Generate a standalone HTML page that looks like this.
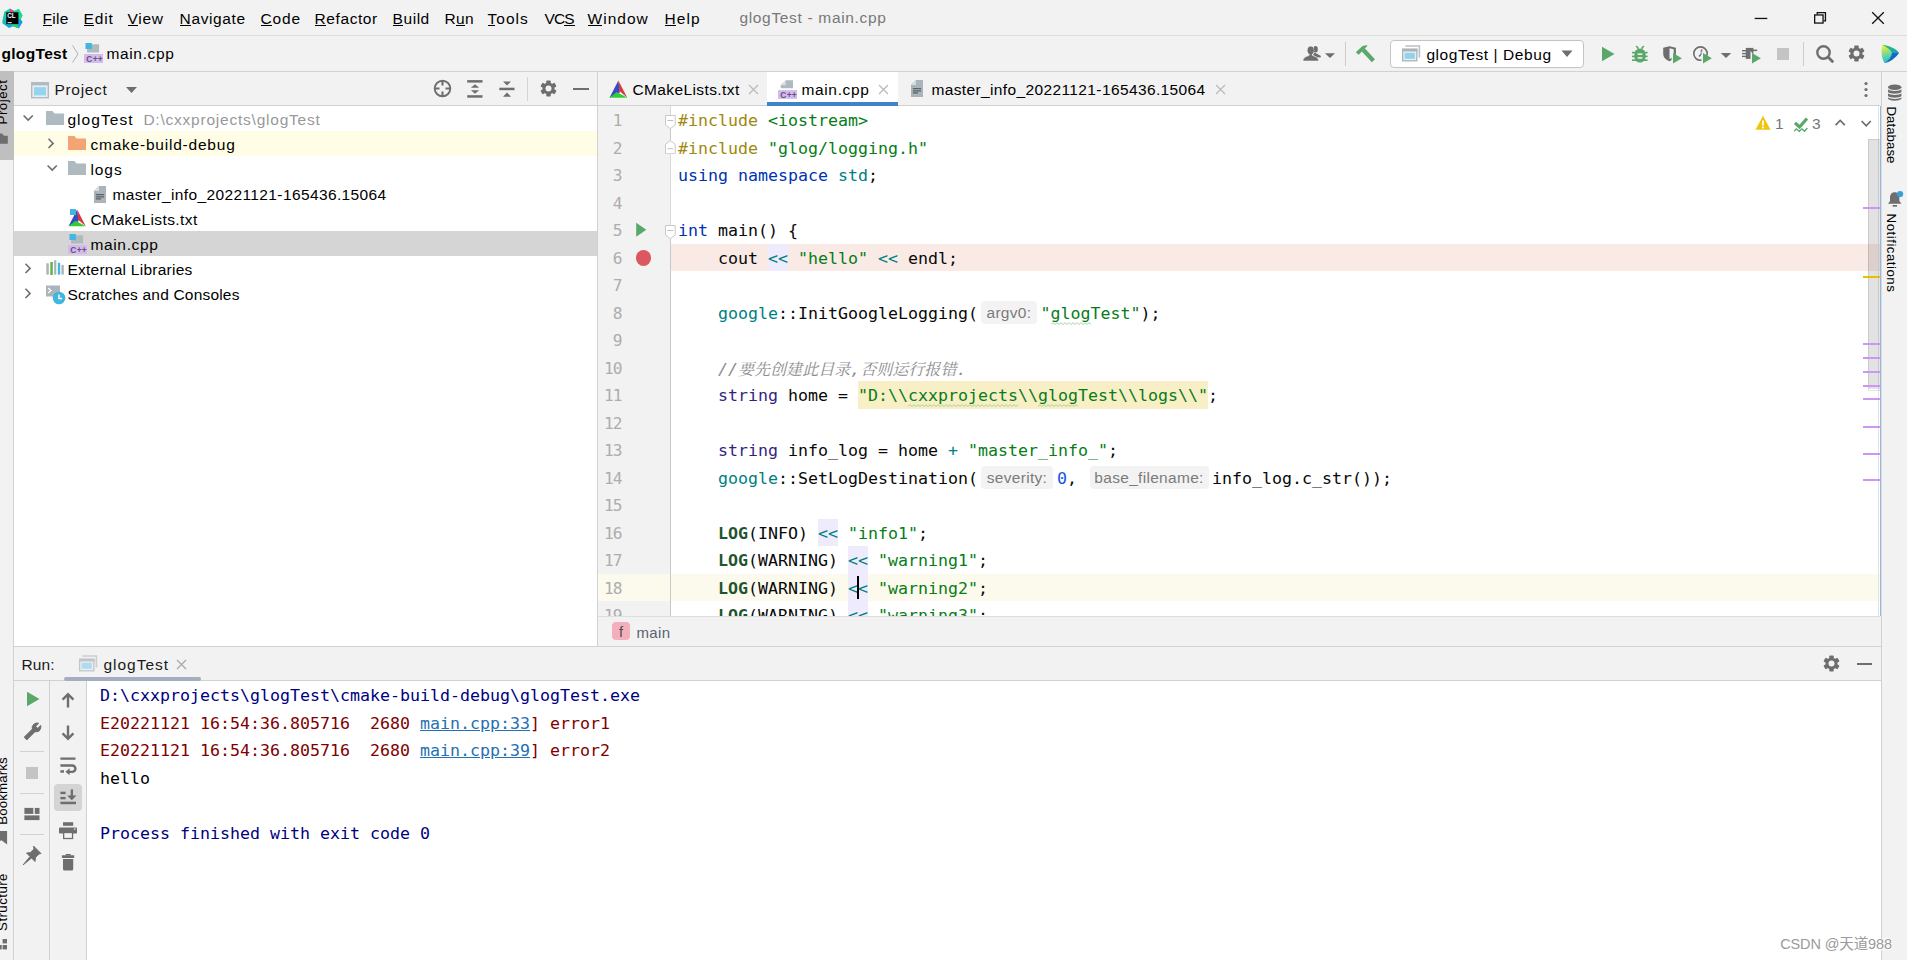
<!DOCTYPE html>
<html lang="zh"><head><meta charset="utf-8"><title>glogTest - main.cpp</title><style>
html,body{margin:0;padding:0;}
body{width:1907px;height:960px;overflow:hidden;background:#f2f2f2;position:relative;font-family:"Liberation Sans","Noto Sans CJK SC",sans-serif;}
.t{position:absolute;white-space:pre;display:block;}
.ui{font-family:"Liberation Sans","Noto Sans CJK SC",sans-serif;}
.mono{font-family:"DejaVu Sans Mono","Liberation Mono","Noto Sans CJK SC",monospace;}
.cl{position:absolute;left:678px;white-space:pre;font-family:"DejaVu Sans Mono","Liberation Mono","Noto Sans CJK SC",monospace;font-size:16.61px;color:#080808;}
.ln{position:absolute;left:598px;width:23.6px;text-align:right;font-family:"DejaVu Sans Mono","Liberation Mono",monospace;font-size:16.2px;color:#adadad;letter-spacing:-0.9px;}
.con{position:absolute;left:100px;white-space:pre;font-family:"DejaVu Sans Mono","Liberation Mono",monospace;font-size:16.61px;height:27px;line-height:27px;}
.hint{display:inline-block;vertical-align:top;height:27px;position:relative;}
.hint i{position:absolute;top:2px;height:23px;line-height:24px;border-radius:4px;background:#f3f3f3;color:#7b7b7b;font-style:normal;font-family:"Liberation Sans",sans-serif;font-size:15.5px;text-align:center;letter-spacing:0.3px;}
.kw{color:#0033b3}.pp{color:#9e880d}.st{color:#067d17}.ns{color:#008080}.nu{color:#1750eb}.ty{color:#371f80}.mc{color:#1f542e;font-weight:bold}.cm{color:#8c8c8c;font-style:italic}
.op{color:#008080}.hl{background:#edebfc}.hl,.hlb{display:inline-block;height:100%;vertical-align:top;}.cj{font-size:16.05px;font-family:"Noto Serif CJK SC","Noto Sans CJK SC",serif;font-weight:400}
.wv{text-decoration:underline wavy #b5d1a0;text-decoration-thickness:1px;text-underline-offset:2px;text-decoration-skip-ink:none}
a{color:#2470b3;text-decoration:underline;}
</style></head><body>
<div style="position:absolute;left:0px;top:0px;width:1907px;height:36px;background:#f2f2f2;"></div>
<div style="position:absolute;left:0px;top:35px;width:1907px;height:1px;background:#dedede;"></div>
<svg style="position:absolute;left:1.5px;top:7.5px;" width="21" height="21" viewBox="0 0 21 21">
<defs><linearGradient id="lg1" x1="0.300" y1="0" x2="0.500" y2="1"><stop offset="0" stop-color="#21d789"/><stop offset="0.550" stop-color="#14c2b4"/><stop offset="1" stop-color="#0a9fe8"/></linearGradient></defs>
<polygon points="0.400,13.300 2.300,3.800 7.900,0.400 12,2.900 16.800,1 20.500,7.300 18.600,11.400 20.500,13.900 16.800,20.200 11.100,18.300 7,19.900 0.400,15.200" fill="url(#lg1)"/>
<polygon points="12,2.900 16.800,1 20.500,7.300 18.600,11.400 14,10" fill="#22d88f"/>
<polygon points="18.600,11.400 20.500,13.900 16.800,20.200 13.500,19.100 14,11" fill="#1e9de6"/>
<polygon points="11.100,18.300 13.500,19.100 16.800,20.200 15,15 9,16" fill="#16d67c"/>
<polygon points="7.900,0.400 12,2.900 10.800,4.600 8.200,4.200" fill="#ee3a92"/>
<rect x="4.300" y="4.300" width="12.100" height="11.800" fill="#000"/>
<text x="5.300" y="10.400" font-family="Liberation Sans,sans-serif" font-size="6.300" font-weight="700" fill="#fff" letter-spacing="-0.100">CL</text>
<rect x="5.500" y="14.200" width="4.300" height="1" fill="#fff"/>
</svg>
<span id="t0" class="t ui mn" style="left:42.6px;top:9px;height:20px;line-height:20px;font-size:15.500px;color:#000;letter-spacing:0.304px;">File</span>
<div style="position:absolute;left:42.59px;top:25px;width:9.48px;height:1px;background:#000;"></div>
<span id="t1" class="t ui mn" style="left:83.6px;top:9px;height:20px;line-height:20px;font-size:15.500px;color:#000;letter-spacing:0.870px;">Edit</span>
<div style="position:absolute;left:83.59px;top:25px;width:10.35px;height:1px;background:#000;"></div>
<span id="t2" class="t ui mn" style="left:127.6px;top:9px;height:20px;line-height:20px;font-size:15.500px;color:#000;letter-spacing:0.718px;">View</span>
<div style="position:absolute;left:127.59px;top:25px;width:10.06px;height:1px;background:#000;"></div>
<span id="t3" class="t ui mn" style="left:179.6px;top:9px;height:20px;line-height:20px;font-size:15.500px;color:#000;letter-spacing:0.627px;">Navigate</span>
<div style="position:absolute;left:179.59px;top:25px;width:11.20px;height:1px;background:#000;"></div>
<span id="t4" class="t ui mn" style="left:260.6px;top:9px;height:20px;line-height:20px;font-size:15.500px;color:#000;letter-spacing:0.784px;">Code</span>
<div style="position:absolute;left:260.59px;top:25px;width:11.20px;height:1px;background:#000;"></div>
<span id="t5" class="t ui mn" style="left:314.6px;top:9px;height:20px;line-height:20px;font-size:15.500px;color:#000;letter-spacing:0.576px;">Refactor</span>
<div style="position:absolute;left:314.59px;top:25px;width:11.21px;height:1px;background:#000;"></div>
<span id="t6" class="t ui mn" style="left:392.6px;top:9px;height:20px;line-height:20px;font-size:15.500px;color:#000;letter-spacing:0.546px;">Build</span>
<div style="position:absolute;left:392.59px;top:25px;width:10.34px;height:1px;background:#000;"></div>
<span id="t7" class="t ui mn" style="left:444.6px;top:9px;height:20px;line-height:20px;font-size:15.500px;color:#000;letter-spacing:0.254px;">Run</span>
<div style="position:absolute;left:456.03px;top:25px;width:8.64px;height:1px;background:#000;"></div>
<span id="t8" class="t ui mn" style="left:487.6px;top:9px;height:20px;line-height:20px;font-size:15.500px;color:#000;letter-spacing:1.003px;">Tools</span>
<div style="position:absolute;left:487.59px;top:25px;width:7.76px;height:1px;background:#000;"></div>
<span id="t9" class="t ui mn" style="left:544.6px;top:9px;height:20px;line-height:20px;font-size:15.500px;color:#000;letter-spacing:-0.892px;">VCS</span>
<div style="position:absolute;left:564.33px;top:25px;width:10.36px;height:1px;background:#000;"></div>
<span id="t10" class="t ui mn" style="left:587.6px;top:9px;height:20px;line-height:20px;font-size:15.500px;color:#000;letter-spacing:1.010px;">Window</span>
<div style="position:absolute;left:587.59px;top:25px;width:14.63px;height:1px;background:#000;"></div>
<span id="t11" class="t ui mn" style="left:664.6px;top:9px;height:20px;line-height:20px;font-size:15.500px;color:#000;letter-spacing:1.077px;">Help</span>
<div style="position:absolute;left:664.59px;top:25px;width:11.20px;height:1px;background:#000;"></div>
<span id="t12" class="t ui" style="left:739.4px;top:8.0px;height:20px;line-height:20px;font-size:15.5px;color:#787878;font-weight:400;letter-spacing:0.673px;">glogTest - main.cpp</span>
<svg style="position:absolute;left:1750px;top:6px;" width="150" height="26" viewBox="0 0 150 26">
<rect x="4.700" y="11.800" width="12.600" height="1.300" fill="#111"/>
<rect x="64.650" y="8.950" width="8.400" height="8.100" fill="none" stroke="#111" stroke-width="1.300"/>
<path d="M67.250 8.400V6.650h8.200v8.200h-1.800" fill="none" stroke="#111" stroke-width="1.300"/>
<path d="M122.200 6.200l11.600 11.500M133.800 6.200l-11.600 11.500" stroke="#111" stroke-width="1.300" fill="none"/>
</svg>
<div style="position:absolute;left:0px;top:37px;width:1907px;height:34px;background:#f2f2f2;"></div>
<div style="position:absolute;left:0px;top:71px;width:1907px;height:1px;background:#d1d1d1;"></div>
<span id="t13" class="t ui" style="left:1.4px;top:43.7px;height:20px;line-height:20px;font-size:15.5px;color:#000;font-weight:700;letter-spacing:0.345px;">glogTest</span>
<svg style="position:absolute;left:70px;top:44px;" width="10" height="20" viewBox="0 0 10 20"><path d="M2.5 1.5L8 10L2.5 18.5" fill="none" stroke="#b0b0b0" stroke-width="1"/></svg>
<svg style="position:absolute;left:84px;top:43px;" width="19" height="20" viewBox="0 0 19 20"><rect x="3.100" y="1.300" width="12" height="8.200" fill="#aeb9c0"/><rect x="1.500" y="0" width="6.300" height="6" fill="#40b6e0"/><rect x="0" y="11" width="19" height="8.900" fill="#d3b9f0"/><text x="2.300" y="18.600" font-family="Liberation Sans,sans-serif" font-size="8.400" font-weight="700" fill="#5f5670" letter-spacing="0.300">C++</text></svg>
<span id="t14" class="t ui" style="left:106.4px;top:43.7px;height:20px;line-height:20px;font-size:15.5px;color:#000;font-weight:400;letter-spacing:0.662px;">main.cpp</span>
<svg style="position:absolute;left:1300px;top:42px;" width="42" height="24" viewBox="0 0 42 24">
<g fill="#6e6e6e"><ellipse cx="15.600" cy="7.200" rx="2.200" ry="3.200"/><path d="M14.500 10.500L21 14l-0.600 1.400-3.400-0.200-4-2.200z"/>
<ellipse cx="10.700" cy="8.300" rx="3.100" ry="3.900" stroke="#f2f2f2" stroke-width="0.800"/><path d="M3 19C3 15.500 6 14.800 9.200 13.300V11h3v2.300C15.500 14.800 18.600 15.500 18.600 19z" stroke="#f2f2f2" stroke-width="0.600"/><ellipse cx="10.700" cy="8.300" rx="3.100" ry="3.900"/></g>
<path d="M25 11.200h10l-5 4.700z" fill="#6e6e6e"/></svg>
<div style="position:absolute;left:1345px;top:42px;width:1px;height:24px;background:#cdcdcd;"></div>
<svg style="position:absolute;left:1354px;top:44px;" width="24" height="22" viewBox="0 0 24 22"><polygon points="1.800,8.200 8.600,1.900 13.400,1.100 12.800,2.600 4.700,10.800" fill="#59a869"/><path d="M9.200 5.800L19.400 16.800" stroke="#59a869" stroke-width="4.200" fill="none"/></svg>
<div style="position:absolute;left:1390px;top:40px;width:192px;height:26px;background:#fff;border:1px solid #c4c4c4;border-radius:4px;"></div>
<svg style="position:absolute;left:1402px;top:45px;" width="19" height="17" viewBox="0 0 19 17"><path d="M3.400 1H17.400V12.400" fill="none" stroke="#b9c1c8" stroke-width="1.600"/><rect x="0.650" y="4.300" width="14.200" height="11.500" fill="#eceff2" stroke="#aab3ba" stroke-width="1.300"/><rect x="0" y="3.700" width="15.500" height="2.800" fill="#aab3ba"/><rect x="2.600" y="7.800" width="10.300" height="6" fill="#8fd3ec"/></svg>
<span id="t15" class="t ui" style="left:1426.4px;top:45.2px;height:20px;line-height:20px;font-size:15.5px;color:#000;font-weight:400;letter-spacing:0.572px;">glogTest | Debug</span>
<svg style="position:absolute;left:1560px;top:49px;" width="14" height="10" viewBox="0 0 14 10"><path d="M1.5 1.5h11l-5.5 6.5z" fill="#6e6e6e"/></svg>
<svg style="position:absolute;left:1600px;top:45px;" width="16" height="18" viewBox="0 0 16 18"><path d="M2 1.800L14.500 9L2 16.200z" fill="#59a869"/></svg>
<svg style="position:absolute;left:1631px;top:44px;" width="18" height="20" viewBox="0 0 18 20"><g fill="#59a869"><rect x="3.400" y="4.600" width="11.200" height="14" rx="5.600"/><rect x="1" y="7.800" width="15.600" height="1.600"/><rect x="1" y="11.600" width="15.600" height="1.600"/><rect x="1" y="15.400" width="15.600" height="1.600"/>
<path d="M5.300 2L7.400 4.800M12.700 2L10.600 4.800" stroke="#59a869" stroke-width="1.600" fill="none"/></g>
<rect x="6.600" y="9.400" width="4.800" height="1.500" fill="#f2f2f2"/><rect x="6.600" y="13.200" width="4.800" height="1.500" fill="#f2f2f2"/></svg>
<svg style="position:absolute;left:1661px;top:44px;" width="22" height="22" viewBox="0 0 22 22"><path d="M2.200 3.800l6.300-1.500 6.400 1.500v5.700c0 4-3 6.500-6.400 7.700-3.400-1.200-6.300-3.700-6.300-7.700z" fill="#6e6e6e"/><path d="M8.500 4.300v10.800c2.300-1 4.200-3 4.200-5.800v-4z" fill="#f2f2f2"/></svg>
<svg style="position:absolute;left:1671.1px;top:51px;" width="13" height="14" viewBox="0 0 13 14"><path d="M0.500 0v14h12.500z" fill="#f2f2f2"/><path d="M2 2.100L10.900 7.300 2 12.500z" fill="#59a869"/></svg>
<svg style="position:absolute;left:1692px;top:44px;" width="22" height="22" viewBox="0 0 22 22"><circle cx="8.500" cy="9.600" r="6.700" fill="none" stroke="#6e6e6e" stroke-width="1.600"/><path d="M9.500 5.500v4.300l-2.500 2.800" fill="none" stroke="#6e6e6e" stroke-width="1.500"/></svg>
<svg style="position:absolute;left:1701.3px;top:51px;" width="13" height="14" viewBox="0 0 13 14"><path d="M0.500 0v14h12.500z" fill="#f2f2f2"/><path d="M2 2.100L10.900 7.300 2 12.500z" fill="#59a869"/></svg>
<svg style="position:absolute;left:1720px;top:52px;" width="12" height="8" viewBox="0 0 12 8"><path d="M0.800 1.100h10.400l-5.200 4.800z" fill="#6e6e6e"/></svg>
<svg style="position:absolute;left:1741px;top:44px;" width="22" height="22" viewBox="0 0 22 22"><g fill="#6e6e6e"><rect x="4.800" y="3.900" width="7.600" height="11" /><rect x="1" y="6" width="4" height="1.400"/><rect x="1" y="8.900" width="4" height="1.400"/><rect x="1" y="11.700" width="4" height="1.400"/><rect x="12" y="5.600" width="4.200" height="1.500"/></g></svg>
<svg style="position:absolute;left:1749.9px;top:51px;" width="13" height="14" viewBox="0 0 13 14"><path d="M0.500 0v14h12.500z" fill="#f2f2f2"/><path d="M2 2.100L10.900 7.300 2 12.500z" fill="#59a869"/></svg>
<div style="position:absolute;left:1777px;top:48px;width:12px;height:12px;background:#c4c4c4;"></div>
<div style="position:absolute;left:1803px;top:42px;width:1px;height:24px;background:#cdcdcd;"></div>
<svg style="position:absolute;left:1815px;top:44px;" width="20" height="20" viewBox="0 0 20 20"><circle cx="8.500" cy="8.500" r="6.200" fill="none" stroke="#6e6e6e" stroke-width="2.400"/><path d="M12.800 12.800l5.400 5.400" stroke="#6e6e6e" stroke-width="2.700"/></svg>
<svg style="position:absolute;left:1848.4px;top:45.3px;" width="17" height="17" viewBox="0 0 17 17"><g transform="translate(8.500 8.500)"><g fill="#6e6e6e"><rect x="-2.200" y="-8.100" width="4.400" height="16.200" rx="0.800"/><rect x="-2.200" y="-8.100" width="4.400" height="16.200" rx="0.800" transform="rotate(60)"/><rect x="-2.200" y="-8.100" width="4.400" height="16.200" rx="0.800" transform="rotate(120)"/><circle r="6"/></g><circle r="3" fill="#f2f2f2"/></g></svg>
<svg style="position:absolute;left:1880px;top:44px;" width="20" height="20" viewBox="0 0 20 20"><defs><linearGradient id="lg2" x1="0.200" y1="0" x2="0.500" y2="1"><stop offset="0" stop-color="#f7f03a"/><stop offset="0.450" stop-color="#7fdc8a"/><stop offset="1" stop-color="#12b8ea"/></linearGradient>
<linearGradient id="lg3" x1="0" y1="0" x2="1" y2="1"><stop offset="0" stop-color="#27c86f"/><stop offset="1" stop-color="#1a9ac9"/></linearGradient></defs>
<path d="M2.300 1C9 1.500 15.500 4.500 19 8.700 15.500 14 10 18 4.500 19 1.500 14 0.800 7 2.300 1z" fill="url(#lg2)"/>
<path d="M2.300 1C9 1.500 15.500 4.500 19 8.700H12C10 5.500 6.500 2.500 2.300 1z" fill="url(#lg3)"/>
<path d="M19 8.700H12C11.500 13 8.500 17 4.500 19 10 18 15.500 14 19 8.700z" fill="#1767c9"/></svg>
<div style="position:absolute;left:0px;top:72px;width:13px;height:888px;background:#f2f2f2;"></div>
<div style="position:absolute;left:13px;top:72px;width:1px;height:888px;background:#d1d1d1;"></div>
<div style="position:absolute;left:0px;top:71px;width:13.5px;height:89px;background:#bfbfbf;"></div>
<span id="v0" class="v ui" style="position:absolute;left:3.1px;top:102.1px;white-space:pre;font-size:13.3px;letter-spacing:0.516px;color:#000;line-height:20px;height:20px;transform:translate(-50%,-50%) rotate(-90deg);">Project</span>
<svg style="position:absolute;left:-1px;top:132.5px;" width="9" height="11" viewBox="0 0 9 11"><path d="M0 0.500h3.300l1.500 2.200h4v8h-8.800z" fill="#6e6e6e"/></svg>
<span id="v1" class="v ui" style="position:absolute;left:3.1px;top:791.35px;white-space:pre;font-size:13.3px;letter-spacing:0.109px;color:#000;line-height:20px;height:20px;transform:translate(-50%,-50%) rotate(-90deg);">Bookmarks</span>
<svg style="position:absolute;left:-0.2px;top:831px;" width="9" height="14" viewBox="0 0 9 14"><path d="M0 0H7.100V13.400L1.450 9.200 0 9.900z" fill="#6e6e6e"/></svg>
<span id="v2" class="v ui" style="position:absolute;left:3.1px;top:901.5px;white-space:pre;font-size:13.3px;letter-spacing:0.427px;color:#000;line-height:20px;height:20px;transform:translate(-50%,-50%) rotate(-90deg);">Structure</span>
<svg style="position:absolute;left:0px;top:938px;" width="10" height="13" viewBox="0 0 10 13"><g fill="#6e6e6e"><rect x="2.600" y="1" width="4.400" height="4.400"/><rect x="2.600" y="7" width="4.400" height="4.400"/><rect x="0" y="7" width="1.700" height="4.400" /></g></svg>
<div style="position:absolute;left:1881px;top:72px;width:26px;height:888px;background:#f2f2f2;"></div>
<div style="position:absolute;left:1881px;top:72px;width:1px;height:888px;background:#d1d1d1;"></div>
<svg style="position:absolute;left:1887.3px;top:84.3px;" width="17" height="17" viewBox="0 0 17 17"><g fill="#6e6e6e" transform="scale(1.03 1)"><ellipse cx="7.500" cy="3.300" rx="6.500" ry="2.800"/><path d="M1 5.300c1.500 2.300 11.500 2.300 13 0v2.700c-1.500 2.300-11.500 2.300-13 0z"/><path d="M1 9.300c1.500 2.300 11.500 2.300 13 0v2.700c-1.500 2.300-11.500 2.300-13 0z"/><path d="M1 13.300c1.500 2.300 11.500 2.300 13 0v1.400c-1.500 2.600-11.500 2.600-13 0z"/></g></svg>
<span id="v3" class="v ui" style="position:absolute;left:1891.4px;top:134.65px;white-space:pre;font-size:13.3px;letter-spacing:0.022px;color:#000;line-height:20px;height:20px;transform:translate(-50%,-50%) rotate(90deg);">Database</span>
<svg style="position:absolute;left:1886px;top:190px;" width="18" height="20" viewBox="0 0 18 20"><path d="M8.700 2.300c-3.300 0-4.700 2.500-4.700 5.300v3.400l-2 2.800h13.400l-2-2.800v-3.400c0-2.800-1.400-5.300-4.700-5.300z" fill="#6e6e6e"/><rect x="6.600" y="15" width="4.400" height="1.700" fill="#6e6e6e"/><circle cx="14.100" cy="4" r="3.100" fill="#389fd6"/></svg>
<span id="v4" class="v ui" style="position:absolute;left:1891.4px;top:252.5px;white-space:pre;font-size:13.3px;letter-spacing:0.489px;color:#000;line-height:20px;height:20px;transform:translate(-50%,-50%) rotate(90deg);">Notifications</span>
<div style="position:absolute;left:14px;top:72px;width:583px;height:33px;background:#f2f2f2;"></div>
<div style="position:absolute;left:14px;top:105px;width:583px;height:1px;background:#d1d1d1;"></div>
<div style="position:absolute;left:14px;top:106px;width:583px;height:540px;background:#ffffff;"></div>
<div style="position:absolute;left:597px;top:72px;width:1px;height:575px;background:#d1d1d1;"></div>
<div style="position:absolute;left:14px;top:646px;width:1867px;height:1px;background:#d1d1d1;"></div>
<svg style="position:absolute;left:31px;top:81.5px;" width="19" height="17" viewBox="0 0 19 17"><rect x="0.700" y="0.700" width="16.600" height="15" fill="#e9edf0" stroke="#b2bbc2" stroke-width="1.400"/><rect x="0" y="0" width="18" height="3.400" fill="#b2bbc2"/><rect x="3" y="5.200" width="12" height="8.200" fill="#94d4ee"/></svg>
<span id="t16" class="t ui" style="left:54.4px;top:79.7px;height:20px;line-height:20px;font-size:15.5px;color:#1a1a1a;font-weight:400;letter-spacing:0.707px;">Project</span>
<svg style="position:absolute;left:125px;top:86px;" width="14" height="8" viewBox="0 0 14 8"><path d="M1 1h11l-5.500 6z" fill="#6e6e6e"/></svg>
<svg style="position:absolute;left:432.5px;top:79.4px;" width="19" height="19" viewBox="0 0 19 19"><circle cx="9.500" cy="9.500" r="7.800" fill="none" stroke="#6e6e6e" stroke-width="1.900"/><path d="M9.500 1.500v5M9.500 12.500v5M1.500 9.500h5M12.500 9.500h5" stroke="#6e6e6e" stroke-width="2.100"/></svg>
<svg style="position:absolute;left:467px;top:80px;" width="16" height="18" viewBox="0 0 16 18"><g fill="#6e6e6e"><rect x="0.200" y="0.100" width="15.300" height="2.500"/><rect x="0.200" y="15.200" width="15.300" height="2.500"/><path d="M8 4.200l4.100 3.600h-8.200zM8 13.800l4.100-3.500h-8.200z"/></g></svg>
<svg style="position:absolute;left:499px;top:80px;" width="16" height="18" viewBox="0 0 16 18"><g fill="#6e6e6e"><rect x="0.300" y="7.700" width="15.200" height="2.500"/><path d="M8 5.400l4-4h-8zM8 12.400l4 4.300h-8z"/></g></svg>
<div style="position:absolute;left:527px;top:77px;width:1px;height:24px;background:#d4d4d4;"></div>
<svg style="position:absolute;left:539.5px;top:80.4px;" width="17" height="17" viewBox="0 0 17 17"><g transform="translate(8.500 8.500)"><g fill="#6e6e6e"><rect x="-2.200" y="-8.100" width="4.400" height="16.200" rx="0.800"/><rect x="-2.200" y="-8.100" width="4.400" height="16.200" rx="0.800" transform="rotate(60)"/><rect x="-2.200" y="-8.100" width="4.400" height="16.200" rx="0.800" transform="rotate(120)"/><circle r="6"/></g><circle r="3" fill="#f2f2f2"/></g></svg>
<div style="position:absolute;left:573.4px;top:87.7px;width:15.2px;height:2.5px;background:#6e6e6e;"></div>
<div style="position:absolute;left:14px;top:131px;width:583px;height:25px;background:#fffde6;"></div>
<div style="position:absolute;left:14px;top:231px;width:583px;height:25px;background:#d5d5d5;"></div>
<svg style="position:absolute;left:22.3px;top:114.4px;" width="13" height="9" viewBox="0 0 13 9"><path d="M1.600 1.500l4.600 4.600 4.600-4.600" fill="none" stroke="#6e6e6e" stroke-width="1.600"/></svg>
<svg style="position:absolute;left:46px;top:111px;" width="18" height="14" viewBox="0 0 18 14"><path d="M0 0h6.500l2 2.500h9.500v11.500h-18z" fill="#afb9c0"/></svg>
<span id="t17" class="t ui" style="left:67.4px;top:109.7px;height:20px;line-height:20px;font-size:15.5px;color:#000;font-weight:400;letter-spacing:1.058px;">glogTest</span>
<span id="t18" class="t ui" style="left:143.4px;top:109.7px;height:20px;line-height:20px;font-size:15.5px;color:#999999;font-weight:400;letter-spacing:0.775px;">D:\cxxprojects\glogTest</span>
<svg style="position:absolute;left:47.3px;top:137.2px;" width="9" height="13" viewBox="0 0 9 13"><path d="M1.500 1.800l4.600 4.600-4.600 4.600" fill="none" stroke="#6e6e6e" stroke-width="1.600"/></svg>
<svg style="position:absolute;left:68px;top:136px;" width="18" height="14" viewBox="0 0 18 14"><path d="M0 0h6.500l2 2.500h9.500v11.500h-18z" fill="#f4a373"/></svg>
<span id="t19" class="t ui" style="left:90.4px;top:134.7px;height:20px;line-height:20px;font-size:15.5px;color:#000;font-weight:400;letter-spacing:0.787px;">cmake-build-debug</span>
<svg style="position:absolute;left:45.8px;top:164.4px;" width="13" height="9" viewBox="0 0 13 9"><path d="M1.600 1.500l4.600 4.600 4.600-4.600" fill="none" stroke="#6e6e6e" stroke-width="1.600"/></svg>
<svg style="position:absolute;left:68px;top:161px;" width="18" height="14" viewBox="0 0 18 14"><path d="M0 0h6.500l2 2.500h9.500v11.500h-18z" fill="#afb9c0"/></svg>
<span id="t20" class="t ui" style="left:90.4px;top:159.7px;height:20px;line-height:20px;font-size:15.5px;color:#000;font-weight:400;letter-spacing:0.941px;">logs</span>
<svg style="position:absolute;left:94px;top:185.6px;" width="12" height="17" viewBox="0 0 12 17"><path d="M5 0h7v17h-12v-12z" fill="#aab4bb"/><path d="M5 0v5h-5z" fill="#d6dce0"/><path d="M1.900 8.700h8.200M1.900 10.800h8.200M1.900 12.900h5.200" stroke="#596066" stroke-width="1.200"/></svg>
<span id="t21" class="t ui" style="left:112.4px;top:184.7px;height:20px;line-height:20px;font-size:15.5px;color:#000;font-weight:400;letter-spacing:0.378px;">master_info_20221121-165436.15064</span>
<svg style="position:absolute;left:68px;top:209.3px;" width="18.3" height="18.3" viewBox="0 0 18 18"><polygon points="9,0.500 17.500,17 0.500,17" fill="#fff"/><polygon points="9,0.500 10.500,12 0.500,17" fill="#3a48c8"/><polygon points="9,0.500 17.500,17 10,10.500" fill="#d93838"/><polygon points="0.500,17 17.500,17 7.500,11.500" fill="#33cc33"/></svg>
<div style="position:absolute;left:69.7px;top:209.2px;width:6.3px;height:5.7px;background:#40b6e0;"></div>
<span id="t22" class="t ui" style="left:90.4px;top:209.7px;height:20px;line-height:20px;font-size:15.5px;color:#000;font-weight:400;letter-spacing:0.397px;">CMakeLists.txt</span>
<svg style="position:absolute;left:68px;top:234px;" width="19" height="20" viewBox="0 0 19 20"><rect x="3.100" y="1.300" width="12" height="8.200" fill="#aeb9c0"/><rect x="1.500" y="0" width="6.300" height="6" fill="#40b6e0"/><rect x="0" y="11" width="19" height="8.900" fill="#d3b9f0"/><text x="2.300" y="18.600" font-family="Liberation Sans,sans-serif" font-size="8.400" font-weight="700" fill="#5f5670" letter-spacing="0.300">C++</text></svg>
<span id="t23" class="t ui" style="left:90.4px;top:234.7px;height:20px;line-height:20px;font-size:15.5px;color:#000;font-weight:400;letter-spacing:0.662px;">main.cpp</span>
<svg style="position:absolute;left:24.3px;top:262.2px;" width="9" height="13" viewBox="0 0 9 13"><path d="M1.500 1.800l4.600 4.600-4.600 4.600" fill="none" stroke="#6e6e6e" stroke-width="1.600"/></svg>
<svg style="position:absolute;left:46px;top:260px;" width="18" height="15" viewBox="0 0 18 15"><rect x="0.300" y="3.300" width="2.500" height="11.300" fill="#aab4bb"/><rect x="4.300" y="2" width="2.500" height="13" fill="#62b543"/><rect x="8.100" y="0.200" width="2.200" height="14.400" fill="#aab4bb"/><rect x="11.800" y="2.800" width="2.400" height="11.800" fill="#40b6e0"/><rect x="15.400" y="4.900" width="2.400" height="9.700" fill="#aab4bb"/></svg>
<span id="t24" class="t ui" style="left:67.4px;top:259.7px;height:20px;line-height:20px;font-size:15.5px;color:#000;font-weight:400;letter-spacing:0.255px;">External Libraries</span>
<svg style="position:absolute;left:24.3px;top:287.2px;" width="9" height="13" viewBox="0 0 9 13"><path d="M1.500 1.800l4.600 4.600-4.600 4.600" fill="none" stroke="#6e6e6e" stroke-width="1.600"/></svg>
<svg style="position:absolute;left:46px;top:285px;" width="20" height="20" viewBox="0 0 20 20"><rect x="0" y="0.500" width="14" height="11" fill="#aab4bb"/><path d="M2 3l3 2.500-3 2.500" fill="none" stroke="#fff" stroke-width="1.200"/><circle cx="13" cy="13" r="6.300" fill="#40b6e0"/><path d="M13 9.500v4h3" fill="none" stroke="#fff" stroke-width="1.400"/></svg>
<span id="t25" class="t ui" style="left:67.4px;top:284.7px;height:20px;line-height:20px;font-size:15.5px;color:#000;font-weight:400;letter-spacing:0.190px;">Scratches and Consoles</span>
<div style="position:absolute;left:598px;top:72px;width:1282px;height:33px;background:#f2f2f2;"></div>
<div style="position:absolute;left:598px;top:105px;width:1282px;height:1px;background:#d1d1d1;"></div>
<div style="position:absolute;left:767px;top:72px;width:131px;height:30px;background:#ffffff;"></div>
<div style="position:absolute;left:767px;top:102px;width:131px;height:4px;background:#4083c9;"></div>
<svg style="position:absolute;left:608.7px;top:79.7px;" width="18.7" height="18.7" viewBox="0 0 18 18"><polygon points="9,0.500 17.500,17 0.500,17" fill="#fff"/><polygon points="9,0.500 10.500,12 0.500,17" fill="#3a48c8"/><polygon points="9,0.500 17.500,17 10,10.500" fill="#d93838"/><polygon points="0.500,17 17.500,17 7.500,11.500" fill="#33cc33"/></svg>
<span id="t26" class="t ui" style="left:632.4px;top:79.7px;height:20px;line-height:20px;font-size:15.5px;color:#000;font-weight:400;letter-spacing:0.397px;">CMakeLists.txt</span>
<svg style="position:absolute;left:747.5px;top:83.5px;" width="11" height="11" viewBox="0 0 11 11"><path d="M1 1l9 9M10 1l-9 9" stroke="#b9b9b9" stroke-width="1.200" fill="none"/></svg>
<svg style="position:absolute;left:778px;top:80px;" width="19" height="20" viewBox="0 0 19 20"><path d="M7.800 0.300h7.200v7.900h-12.200v-3z" fill="#aeb9c0"/><path d="M7.800 0.300v4.900h-5z" fill="#d9dee2"/><rect x="0" y="10.100" width="19" height="8.800" fill="#d3b9f0"/><text x="2.300" y="17.600" font-family="Liberation Sans,sans-serif" font-size="8.400" font-weight="700" fill="#5f5670" letter-spacing="0.300">C++</text></svg>
<span id="t27" class="t ui" style="left:801.4px;top:79.7px;height:20px;line-height:20px;font-size:15.5px;color:#000;font-weight:400;letter-spacing:0.662px;">main.cpp</span>
<svg style="position:absolute;left:877.5px;top:83.5px;" width="11" height="11" viewBox="0 0 11 11"><path d="M1 1l9 9M10 1l-9 9" stroke="#b9b9b9" stroke-width="1.200" fill="none"/></svg>
<svg style="position:absolute;left:911px;top:80.3px;" width="12" height="17" viewBox="0 0 12 17"><path d="M5 0h7v17h-12v-12z" fill="#aab4bb"/><path d="M5 0v5h-5z" fill="#d6dce0"/><path d="M1.900 8.700h8.200M1.900 10.800h8.200M1.900 12.900h5.200" stroke="#596066" stroke-width="1.200"/></svg>
<span id="t28" class="t ui" style="left:931.4px;top:79.7px;height:20px;line-height:20px;font-size:15.5px;color:#000;font-weight:400;letter-spacing:0.378px;">master_info_20221121-165436.15064</span>
<svg style="position:absolute;left:1214.5px;top:83.5px;" width="11" height="11" viewBox="0 0 11 11"><path d="M1 1l9 9M10 1l-9 9" stroke="#b9b9b9" stroke-width="1.200" fill="none"/></svg>
<svg style="position:absolute;left:1863px;top:81px;" width="6" height="17" viewBox="0 0 6 17"><circle cx="3" cy="2.500" r="1.600" fill="#6e6e6e"/><circle cx="3" cy="8.500" r="1.600" fill="#6e6e6e"/><circle cx="3" cy="14.500" r="1.600" fill="#6e6e6e"/></svg>
<div style="position:absolute;left:598px;top:106px;width:1282px;height:510px;background:#fff;overflow:hidden;">
<div style="position:absolute;left:0px;top:0px;width:72px;height:510px;background:#f2f2f2;"></div>
<div style="position:absolute;left:72px;top:0px;width:1px;height:510px;background:#d9d9d9;"></div>
<div style="position:absolute;left:73px;top:138px;width:1209px;height:27px;background:#faeae6;"></div>
<div style="position:absolute;left:0px;top:468px;width:72px;height:27px;background:#fcfaed;"></div>
<div style="position:absolute;left:73px;top:468px;width:1209px;height:27px;background:#fcfaed;"></div>
<div class="ln" style="left:0;top:0px;height:28px;line-height:30px;">1</div>
<div class="cl" style="left:80px;top:0px;height:28px;line-height:30px;"><span class="pp">#include </span><span class="st">&lt;iostream&gt;</span></div>
<div class="ln" style="left:0;top:28px;height:27px;line-height:29px;">2</div>
<div class="cl" style="left:80px;top:28px;height:27px;line-height:29px;"><span class="pp">#include </span><span class="st">"glog/logging.h"</span></div>
<div class="ln" style="left:0;top:55px;height:28px;line-height:30px;">3</div>
<div class="cl" style="left:80px;top:55px;height:28px;line-height:30px;"><span class="kw">using namespace </span><span class="ns">std</span>;</div>
<div class="ln" style="left:0;top:83px;height:27px;line-height:29px;">4</div>
<div class="ln" style="left:0;top:110px;height:28px;line-height:30px;">5</div>
<div class="cl" style="left:80px;top:110px;height:28px;line-height:30px;"><span class="kw">int </span>main() {</div>
<div class="ln" style="left:0;top:138px;height:27px;line-height:29px;">6</div>
<div class="cl" style="left:80px;top:138px;height:27px;line-height:29px;">    cout <span class="op hl">&lt;&lt;</span> <span class="st">"hello"</span> <span class="op">&lt;&lt;</span> endl;</div>
<div class="ln" style="left:0;top:165px;height:28px;line-height:30px;">7</div>
<div class="ln" style="left:0;top:193px;height:27px;line-height:29px;">8</div>
<div class="cl" style="left:80px;top:193px;height:27px;line-height:29px;">    <span class="ns">google</span>::InitGoogleLogging(<span class="hint" style="width:62.5px"><i style="left:2.7px;width:56.5px">argv0:</i></span><span class="st">"glogTest"</span>);</div>
<div class="ln" style="left:0;top:220px;height:28px;line-height:30px;">9</div>
<div class="ln" style="left:0;top:248px;height:27px;line-height:29px;">10</div>
<div class="cl" style="left:80px;top:248px;height:27px;line-height:29px;">    <span class="cm">//<span class="cj">要先创建此目录</span>,<span class="cj">否则运行报错</span>.</span></div>
<div class="ln" style="left:0;top:275px;height:28px;line-height:30px;">11</div>
<div class="cl" style="left:80px;top:275px;height:28px;line-height:30px;">    <span class="ty">string </span>home = <span class="st hlb" style="background:#f9efc7">"D:\\cxxprojects\\glogTest\\logs\\"</span>;</div>
<div class="ln" style="left:0;top:303px;height:27px;line-height:29px;">12</div>
<div class="ln" style="left:0;top:330px;height:28px;line-height:30px;">13</div>
<div class="cl" style="left:80px;top:330px;height:28px;line-height:30px;">    <span class="ty">string </span>info_log = home <span class="op">+</span> <span class="st">"master_info_"</span>;</div>
<div class="ln" style="left:0;top:358px;height:27px;line-height:29px;">14</div>
<div class="cl" style="left:80px;top:358px;height:27px;line-height:29px;">    <span class="ns">google</span>::SetLogDestination(<span class="hint" style="width:79px"><i style="left:3px;width:72px">severity:</i></span><span class="nu">0</span>, <span class="hint" style="width:125px"><i style="left:2.5px;width:119.0px">base_filename:</i></span>info_log.c_str());</div>
<div class="ln" style="left:0;top:385px;height:28px;line-height:30px;">15</div>
<div class="ln" style="left:0;top:413px;height:27px;line-height:29px;">16</div>
<div class="cl" style="left:80px;top:413px;height:27px;line-height:29px;">    <span class="mc">LOG</span>(INFO) <span class="op hl">&lt;&lt;</span> <span class="st">"info1"</span>;</div>
<div class="ln" style="left:0;top:440px;height:28px;line-height:30px;">17</div>
<div class="cl" style="left:80px;top:440px;height:28px;line-height:30px;">    <span class="mc">LOG</span>(WARNING) <span class="op hl">&lt;&lt;</span> <span class="st">"warning1"</span>;</div>
<div class="ln" style="left:0;top:468px;height:27px;line-height:29px;">18</div>
<div class="cl" style="left:80px;top:468px;height:27px;line-height:29px;">    <span class="mc">LOG</span>(WARNING) <span class="op hl">&lt;&lt;</span> <span class="st">"warning2"</span>;</div>
<div class="ln" style="left:0;top:495px;height:28px;line-height:30px;">19</div>
<div class="cl" style="left:80px;top:495px;height:28px;line-height:30px;">    <span class="mc">LOG</span>(WARNING) <span class="op hl">&lt;&lt;</span> <span class="st">"warning3"</span>;</div>
<svg style="position:absolute;left:452.5px;top:215.5px" width="41" height="4" viewBox="0 0 41 4"><polyline points="0.0,2.6 2.0,0.6 4.0,2.6 6.0,0.6 8.0,2.6 10.0,0.6 12.0,2.6 14.0,0.6 16.0,2.6 18.0,0.6 20.0,2.6 22.0,0.6 24.0,2.6 26.0,0.6 28.0,2.6 30.0,0.6 32.0,2.6 34.0,0.6 36.0,2.6 38.0,0.6 40.0,2.6" fill="none" stroke="#8fc38a" stroke-width="0.9" opacity="0.85"/></svg>
<svg style="position:absolute;left:310px;top:297.5px" width="111" height="4" viewBox="0 0 111 4"><polyline points="0.0,2.6 2.0,0.6 4.0,2.6 6.0,0.6 8.0,2.6 10.0,0.6 12.0,2.6 14.0,0.6 16.0,2.6 18.0,0.6 20.0,2.6 22.0,0.6 24.0,2.6 26.0,0.6 28.0,2.6 30.0,0.6 32.0,2.6 34.0,0.6 36.0,2.6 38.0,0.6 40.0,2.6 42.0,0.6 44.0,2.6 46.0,0.6 48.0,2.6 50.0,0.6 52.0,2.6 54.0,0.6 56.0,2.6 58.0,0.6 60.0,2.6 62.0,0.6 64.0,2.6 66.0,0.6 68.0,2.6 70.0,0.6 72.0,2.6 74.0,0.6 76.0,2.6 78.0,0.6 80.0,2.6 82.0,0.6 84.0,2.6 86.0,0.6 88.0,2.6 90.0,0.6 92.0,2.6 94.0,0.6 96.0,2.6 98.0,0.6 100.0,2.6 102.0,0.6 104.0,2.6 106.0,0.6 108.0,2.6 110.0,0.6" fill="none" stroke="#8fc38a" stroke-width="0.9" opacity="0.85"/></svg>
<svg style="position:absolute;left:440px;top:297.5px" width="41" height="4" viewBox="0 0 41 4"><polyline points="0.0,2.6 2.0,0.6 4.0,2.6 6.0,0.6 8.0,2.6 10.0,0.6 12.0,2.6 14.0,0.6 16.0,2.6 18.0,0.6 20.0,2.6 22.0,0.6 24.0,2.6 26.0,0.6 28.0,2.6 30.0,0.6 32.0,2.6 34.0,0.6 36.0,2.6 38.0,0.6 40.0,2.6" fill="none" stroke="#8fc38a" stroke-width="0.9" opacity="0.85"/></svg>
<div style="position:absolute;left:259px;top:470px;width:2px;height:23px;background:#000;"></div>
<svg style="position:absolute;left:37px;top:116px" width="14" height="16" viewBox="0 0 14 16"><path d="M1.200 0.700L11.300 7.700 1.200 14.700z" fill="#59a869"/></svg>
<div style="position:absolute;left:37.60000000000002px;top:143.8px;width:15.800px;height:15.800px;border-radius:50%;background:#db5860;"></div>
<svg style="position:absolute;left:67px;top:9px" width="11" height="14.5" viewBox="0 0 11 14.5"><path d="M0.500 0.500h9.700v9.500l-4.850 3.600-4.850-3.600z" fill="#fff" stroke="#c9c9c9" stroke-width="1"/><path d="M2.500 5.500h5.700" stroke="#c0c0c0" stroke-width="1"/></svg>
<div style="position:absolute;left:72px;top:23px;width:1px;height:11px;background:#c9c9c9;"></div>
<svg style="position:absolute;left:67px;top:33.5px" width="11" height="14.5" viewBox="0 0 11 14.5"><path d="M0.500 13.800h9.700v-9.500l-4.850-3.600-4.850 3.600z" fill="#fff" stroke="#c9c9c9" stroke-width="1"/><path d="M2.500 8.700h5.700" stroke="#c0c0c0" stroke-width="1"/></svg>
<svg style="position:absolute;left:67px;top:119px" width="11" height="14.5" viewBox="0 0 11 14.5"><path d="M0.500 0.500h9.700v9.500l-4.850 3.600-4.850-3.600z" fill="#fff" stroke="#c9c9c9" stroke-width="1"/><path d="M2.500 5.500h5.700" stroke="#c0c0c0" stroke-width="1"/></svg>
<div style="position:absolute;left:72px;top:133px;width:1px;height:380px;background:#c9c9c9;"></div>
<div style="position:absolute;left:1280px;top:0px;width:1px;height:510px;background:#e3e3e3;"></div>
<div style="position:absolute;left:1270px;top:33px;width:11px;height:250px;background:rgba(0,0,0,0.115);"></div>
<div style="position:absolute;left:1270px;top:33px;width:11.5px;height:251.5px;background:transparent;border:1px solid rgba(0,0,0,0.100);box-sizing:border-box;"></div>
<div style="position:absolute;left:1265px;top:100.80000000000001px;width:17px;height:2.4px;background:#cc96f5;"></div>
<div style="position:absolute;left:1265px;top:236.8px;width:17px;height:2.4px;background:#cc96f5;"></div>
<div style="position:absolute;left:1265px;top:250.8px;width:17px;height:2.4px;background:#cc96f5;"></div>
<div style="position:absolute;left:1265px;top:264.8px;width:17px;height:2.4px;background:#cc96f5;"></div>
<div style="position:absolute;left:1265px;top:278.8px;width:17px;height:2.4px;background:#cc96f5;"></div>
<div style="position:absolute;left:1265px;top:291.8px;width:17px;height:2.4px;background:#cc96f5;"></div>
<div style="position:absolute;left:1265px;top:319.8px;width:17px;height:2.4px;background:#cc96f5;"></div>
<div style="position:absolute;left:1265px;top:346.8px;width:17px;height:2.4px;background:#cc96f5;"></div>
<div style="position:absolute;left:1265px;top:372.8px;width:17px;height:2.4px;background:#cc96f5;"></div>
<div style="position:absolute;left:1265px;top:169.5px;width:17px;height:2px;background:#e5bf00;"></div>
<svg style="position:absolute;left:1157px;top:9px" width="16" height="16" viewBox="0 0 16 16"><path d="M8 0.800L15.500 14.800h-15z" fill="#f1c40f"/><rect x="7.100" y="5.500" width="1.800" height="5" fill="#fff"/><rect x="7.100" y="11.600" width="1.800" height="1.800" fill="#fff"/></svg>
<svg style="position:absolute;left:1195px;top:8px" width="17" height="19" viewBox="0 0 17 19"><path d="M2 8.800l4.500 4.200 7.500-8.500" fill="none" stroke="#59a869" stroke-width="3.200"/><path d="M1.200 17.300l2.200-2.500 2.900 2.500 2.600-2.500 2.600 2.500 2.900-3.300" fill="none" stroke="#59a869" stroke-width="1.300"/></svg>
<svg style="position:absolute;left:1236px;top:12px" width="13" height="9" viewBox="0 0 13 9"><path d="M1.600 7.200l4.600-4.800 4.600 4.800" fill="none" stroke="#6e6e6e" stroke-width="1.700"/></svg>
<svg style="position:absolute;left:1261.8px;top:13px" width="13" height="9" viewBox="0 0 13 9"><path d="M1.600 2l4.600 4.800 4.600-4.800" fill="none" stroke="#6e6e6e" stroke-width="1.700"/></svg>
<span class="ui" style="position:absolute;left:1177px;top:8px;height:20px;line-height:20px;font-size:15.500px;color:#767676;">1</span>
<span class="ui" style="position:absolute;left:1214px;top:8px;height:20px;line-height:20px;font-size:15.500px;color:#767676;">3</span>
</div>
<div style="position:absolute;left:1880px;top:106px;width:1px;height:510px;background:#93b8e6;"></div>
<div style="position:absolute;left:1881px;top:106px;width:1px;height:510px;background:#dadada;"></div>
<div style="position:absolute;left:598px;top:616px;width:1282px;height:30px;background:#f2f2f2;"></div>
<div style="position:absolute;left:598px;top:616px;width:1282px;height:1px;background:#dedede;"></div>
<div style="position:absolute;left:612px;top:622px;width:18px;height:18px;border-radius:4px;background:#f4afbd;"></div>
<span class="ui" style="position:absolute;left:612px;top:622.500px;width:18px;height:18px;line-height:18px;text-align:center;font-size:14.500px;color:#4d4d4d;">f</span>
<span id="t29" class="t ui" style="left:636.4px;top:622.7px;height:20px;line-height:20px;font-size:15px;color:#5a6270;font-weight:400;letter-spacing:0.421px;">main</span>
<div style="position:absolute;left:14px;top:647px;width:1867px;height:33px;background:#f2f2f2;"></div>
<div style="position:absolute;left:14px;top:680px;width:1867px;height:1px;background:#d1d1d1;"></div>
<div style="position:absolute;left:14px;top:681px;width:36px;height:279px;background:#f2f2f2;"></div>
<div style="position:absolute;left:49px;top:681px;width:1px;height:279px;background:#d1d1d1;"></div>
<div style="position:absolute;left:50px;top:681px;width:36px;height:279px;background:#f2f2f2;"></div>
<div style="position:absolute;left:86px;top:681px;width:1px;height:279px;background:#d1d1d1;"></div>
<div style="position:absolute;left:87px;top:681px;width:1794px;height:279px;background:#ffffff;"></div>
<span id="t30" class="t ui" style="left:21.4px;top:654.7px;height:20px;line-height:20px;font-size:15.5px;color:#1a1a1a;font-weight:400;letter-spacing:0.113px;">Run:</span>
<svg style="position:absolute;left:79px;top:655.2px;opacity:0.7;" width="19" height="17" viewBox="0 0 19 17"><path d="M3.400 1H17.400V12.400" fill="none" stroke="#b9c1c8" stroke-width="1.600"/><rect x="0.650" y="4.300" width="14.200" height="11.500" fill="#eceff2" stroke="#aab3ba" stroke-width="1.300"/><rect x="0" y="3.700" width="15.500" height="2.800" fill="#aab3ba"/><rect x="2.600" y="7.800" width="10.300" height="6" fill="#8fd3ec"/></svg>
<span id="t31" class="t ui" style="left:103.4px;top:654.7px;height:20px;line-height:20px;font-size:15.5px;color:#1a1a1a;font-weight:400;letter-spacing:0.996px;">glogTest</span>
<svg style="position:absolute;left:176px;top:659px;" width="11" height="11" viewBox="0 0 11 11"><path d="M1 1l9 9M10 1l-9 9" stroke="#a8a8a8" stroke-width="1.200" fill="none"/></svg>
<div style="position:absolute;left:64px;top:677px;width:137px;height:4px;border-radius:2px;background:#a4aec0;"></div>
<svg style="position:absolute;left:1823.2px;top:655.2px;" width="17" height="17" viewBox="0 0 17 17"><g transform="translate(8.500 8.500)"><g fill="#6e6e6e"><rect x="-2.200" y="-8.100" width="4.400" height="16.200" rx="0.800"/><rect x="-2.200" y="-8.100" width="4.400" height="16.200" rx="0.800" transform="rotate(60)"/><rect x="-2.200" y="-8.100" width="4.400" height="16.200" rx="0.800" transform="rotate(120)"/><circle r="6"/></g><circle r="3" fill="#f2f2f2"/></g></svg>
<div style="position:absolute;left:1857.3px;top:662.6px;width:15.2px;height:2.5px;background:#6e6e6e;"></div>
<svg style="position:absolute;left:25px;top:690px;" width="16" height="18" viewBox="0 0 16 18"><path d="M2 1.800L14.500 9L2 16.200z" fill="#59a869"/></svg>
<svg style="position:absolute;left:23px;top:722px;" width="19" height="19" viewBox="0 0 19 19"><path d="M1.500 15.200L9.500 7.200A4.800 4.800 0 0 1 15.300 1.300L12.300 4.300 14.700 6.700 17.700 3.700A4.800 4.800 0 0 1 11.800 9.500L3.800 17.500z" fill="#6e6e6e" stroke="#6e6e6e" stroke-width="1.100" stroke-linejoin="round"/></svg>
<div style="position:absolute;left:20px;top:751px;width:24px;height:1px;background:#d1d1d1;"></div>
<div style="position:absolute;left:26px;top:767px;width:12px;height:12px;background:#c4c4c4;"></div>
<div style="position:absolute;left:20px;top:793px;width:24px;height:1px;background:#d1d1d1;"></div>
<svg style="position:absolute;left:24px;top:807px;" width="16" height="14" viewBox="0 0 16 14"><g fill="#6e6e6e"><rect x="0.400" y="0.900" width="8.900" height="6"/><rect x="10.800" y="0.900" width="4.700" height="6"/><rect x="0.400" y="8.400" width="15.100" height="4.700"/></g></svg>
<div style="position:absolute;left:20px;top:834px;width:24px;height:1px;background:#d1d1d1;"></div>
<svg style="position:absolute;left:22px;top:845px;" width="20" height="20" viewBox="0 0 20 20"><path d="M11.500 1l7.500 7.500-2 0.500-3.500 3.500-0.500 4-3.500-3.500-8.500 7 7-8.500-3.500-3.500 4-0.500 3.500-3.500z" fill="#6e6e6e" stroke="#6e6e6e" stroke-width="0.900" stroke-linejoin="round"/></svg>
<svg style="position:absolute;left:60px;top:692px;" width="16" height="16" viewBox="0 0 16 16"><path d="M8 15.500V2.500M2.600 7.600L8 2.200l5.400 5.400" fill="none" stroke="#6e6e6e" stroke-width="2.400"/></svg>
<svg style="position:absolute;left:60px;top:725px;" width="16" height="16" viewBox="0 0 16 16"><path d="M8 0.500V13.500M2.600 8.400L8 13.800l5.400-5.400" fill="none" stroke="#6e6e6e" stroke-width="2.400"/></svg>
<svg style="position:absolute;left:59px;top:756px;" width="19" height="19" viewBox="0 0 19 19"><path d="M1.400 2.600h15.100M1.400 9.500h11.800a3.200 3.200 0 0 1 0 6.400h-3.500" fill="none" stroke="#6e6e6e" stroke-width="2.400"/><path d="M10.600 12.200v7l-4.200-3.500z" fill="#6e6e6e"/><rect x="1.400" y="14.200" width="3.600" height="2.500" fill="#6e6e6e"/></svg>
<div style="position:absolute;left:54.100px;top:783.600px;width:28.100px;height:27.700px;border-radius:4px;background:#d4d4d4;"></div>
<svg style="position:absolute;left:60px;top:788px;" width="17" height="17" viewBox="0 0 17 17"><g fill="#6e6e6e"><rect x="0.400" y="3.700" width="5.200" height="2.400"/><rect x="0.400" y="8.900" width="5.200" height="2.400"/><rect x="0.400" y="13.700" width="15.600" height="2.500"/><rect x="10.700" y="1.400" width="2.300" height="7"/><path d="M7.100 7.600h9.400l-4.700 4.700z"/></g></svg>
<svg style="position:absolute;left:59px;top:821px;" width="18" height="19" viewBox="0 0 18 19"><g fill="#6e6e6e"><rect x="4" y="1.200" width="10.200" height="3.600"/><rect x="0" y="6.400" width="18" height="6.200" rx="0.800"/><rect x="4.650" y="11.500" width="8.900" height="6" fill="#f2f2f2" stroke="#6e6e6e" stroke-width="1.300"/></g><rect x="14.800" y="7.500" width="1.800" height="1.300" fill="#d8d8d8"/></svg>
<svg style="position:absolute;left:60px;top:853px;" width="16" height="19" viewBox="0 0 16 19"><g fill="#6e6e6e"><rect x="5.600" y="1" width="5.200" height="1.500" rx="0.500"/><rect x="1.900" y="2.200" width="12.300" height="2.700" rx="0.400"/><path d="M3 6h10.200v9.900a1.500 1.500 0 0 1-1.500 1.500h-7.200a1.500 1.500 0 0 1-1.500-1.500z"/></g></svg>
<div class="con" style="top:682px;color:#00007f;">D:\cxxprojects\glogTest\cmake-build-debug\glogTest.exe</div>
<div class="con" style="top:710px;color:#7f0000;">E20221121 16:54:36.805716  2680 <a>main.cpp:33</a>] error1</div>
<div class="con" style="top:737px;color:#7f0000;">E20221121 16:54:36.805716  2680 <a>main.cpp:39</a>] error2</div>
<div class="con" style="top:765px;color:#000000;">hello</div>
<div class="con" style="top:820px;color:#00007f;">Process finished with exit code 0</div>
<span class="ui" style="position:absolute;left:1780.200px;top:934px;height:20px;line-height:20px;font-size:14.5px;color:#9a9a9a;white-space:pre;text-shadow:0 0 1.500px #fff,0 0 1.500px #fff,1px 1px 0 #fff,-1px -1px 0 #fff;letter-spacing:-0.120px;">CSDN @天道988</span>
</body></html>
